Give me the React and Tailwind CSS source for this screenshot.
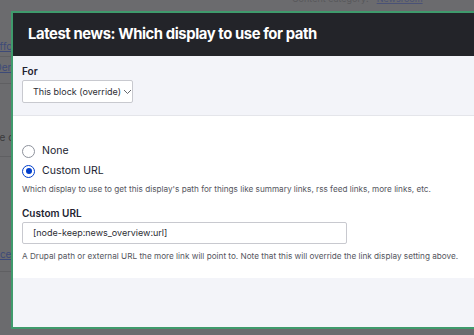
import React from 'react';

const font = { fontFamily: 'Inter, "Noto Sans", "Liberation Sans", sans-serif' };

const Radio = ({ checked, label }) => (
  <label className="flex items-center gap-[7px] h-[14px]">
    {checked ? (
      <span className="w-[13px] h-[13px] rounded-full border-[1.5px] border-[#003ecc] flex items-center justify-center bg-white">
        <span className="w-[6px] h-[6px] rounded-full bg-[#003ecc]" />
      </span>
    ) : (
      <span className="w-[13px] h-[13px] rounded-full border border-[#8e929c] bg-white" />
    )}
    <span className="text-[10.5px] text-[#222330]">{label}</span>
  </label>
);

export default function App() {
  return (
    <div className="relative w-[474px] h-[335px] overflow-hidden bg-[#6b6b6e]" style={font}>
      {/* page behind the overlay */}
      <div className="flex flex-col text-[10px] text-[#3d4a78]">
        <div className="h-[4px] ml-[292px] flex gap-2 text-[9px]">
          <span className="text-[#58585b] -mt-[8px]">Content category:</span>
          <span className="underline text-[#4a5276] -mt-[8px]">Newsroom</span>
        </div>
        <div className="h-[34px]" />
        <div className="-ml-[6px] underline h-[16px] leading-[16px]">affc</div>
        <div className="border-t border-[#5f5f62] mt-[2px] w-[12px]" />
        <div className="-ml-[6px] underline h-[16px] leading-[16px] mt-[2px]">Oen</div>
        <div className="border-t border-[#5f5f62] mt-[8px] w-[12px]" />
        <div className="h-[46px]" />
        <div className="-ml-[4px] h-[14px] leading-[14px] text-[#3a3a3c]">re c</div>
        <div className="border-t border-[#5f5f62] mt-[12px] w-[12px]" />
        <div className="h-[90px]" />
        <div className="-ml-[6px] underline h-[14px] leading-[14px]">nce</div>
        <div className="border-t border-[#5f5f62] mt-[10px] w-[12px]" />
      </div>

      {/* dialog */}
      <div className="absolute left-[11px] top-[11px] w-[480px] h-[318px] border-2 border-[#3f9a6c] bg-white flex flex-col">
        <div className="h-[43px] shrink-0 bg-[#232429] flex items-center pl-[15px]">
          <h1 className="text-white font-bold text-[14.8px] tracking-[-0.4px]">
            Latest news: Which display to use for path
          </h1>
        </div>

        <div className="h-[60px] shrink-0 bg-[#f3f4f9] border-b border-[#e4e5ea] pl-[9px] pt-[9px]">
          <div className="text-[10px] font-semibold text-[#222330] leading-[12px]">For</div>
          <div className="mt-[3px] w-[111px] h-[23px] bg-white border border-[#c8c9cf] rounded-[2px] flex items-center pl-[10px] gap-[2px] text-[9px] text-[#2c2d33]">
            <span>This block (override)</span>
            <svg width="9" height="6" viewBox="0 0 9 6" fill="none">
              <path d="M1 1l3.5 3.5L8 1" stroke="#55565c" strokeWidth="0.9" />
            </svg>
          </div>
        </div>

        <div className="h-[162px] shrink-0 bg-white pl-[9px] pt-[28px] flex flex-col">
          <div className="flex flex-col gap-[6px]">
            <Radio label="None" />
            <Radio checked label="Custom URL" />
          </div>
          <p className="mt-[5px] text-[8.2px] text-[#55565e] leading-[12px]">
            Which display to use to get this display's path for things like summary links, rss feed links, more links, etc.
          </p>
          <div className="mt-[12px] text-[10px] font-semibold text-[#222330] leading-[12px]">Custom URL</div>
          <div className="mt-[3px] w-[325px] h-[22px] border border-[#c8c9cf] rounded-[2px] flex items-center pl-[10px] text-[9px] text-[#2c2d33]">
            [node-keep:news_overview:url]
          </div>
          <p className="mt-[6px] text-[8.2px] text-[#55565e] leading-[12px]">
            A Drupal path or external URL the more link will point to. Note that this will override the link display setting above.
          </p>
        </div>

        <div className="flex-1 bg-[#f3f4f9]" />
      </div>
    </div>
  );
}
